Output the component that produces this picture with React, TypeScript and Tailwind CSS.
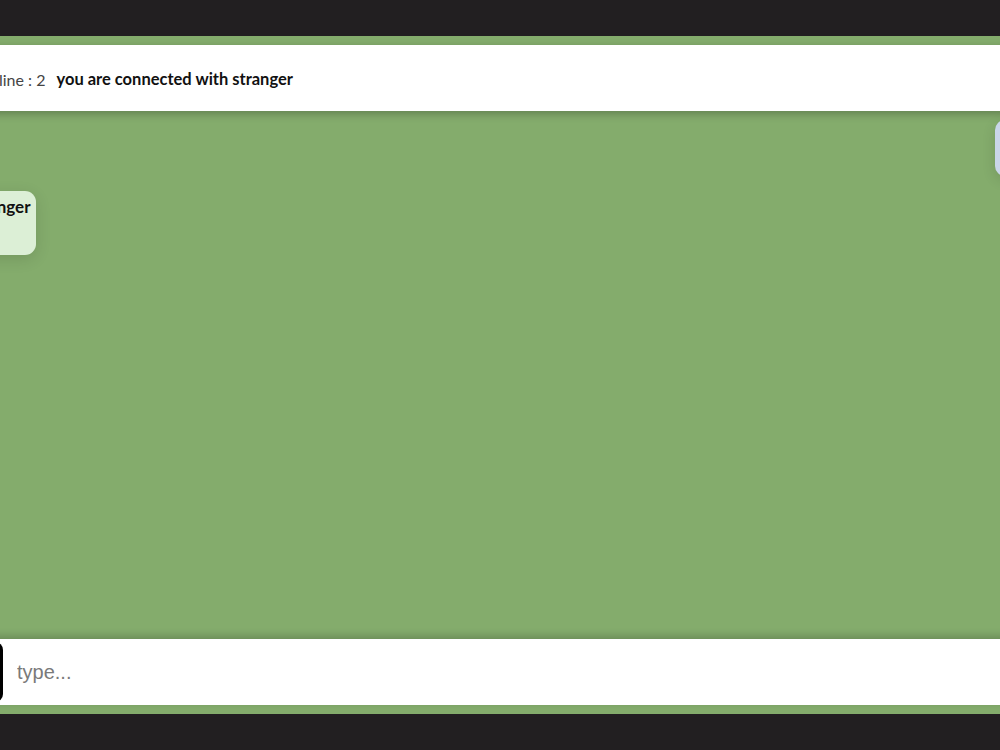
import React from "react";

export default function App() {
  return (
    <div className="h-[750px] w-[1000px] overflow-hidden bg-[#221f21] pt-[36px] pb-[36px] font-['Lato',sans-serif]">
      {/* chat window, wider than the viewport */}
      <div className="ml-[-120px] flex h-full w-[1300px] flex-col bg-[#84ac6c] py-[9px]">
        {/* header */}
        <div className="relative z-10 flex h-[66px] shrink-0 items-center gap-[11px] bg-white pl-[101px] pt-[3px] shadow-[0_3px_8px_rgba(0,0,0,0.25)]">
          <span className="text-[16px] text-[#444]">online : 2</span>
          <span className="text-[16.5px] font-bold text-[#111]">you are connected with stranger</span>
        </div>

        {/* messages */}
        <div className="flex flex-1 flex-col gap-[15px] overflow-hidden pt-[9px]">
          <div className="flex justify-end pr-[35px]">
            <div className="h-[56px] w-[150px] rounded-[10px] bg-[#c9d6e9] shadow-[0_4px_14px_rgba(0,0,0,0.12)]" />
          </div>
          <div className="flex">
            <div className="ml-[82px] flex h-[64px] flex-col rounded-[11px] bg-[#dcefd6] px-[6px] pt-[3px] shadow-[0_4px_16px_rgba(0,0,0,0.12)]">
              <span className="text-[17px] font-bold text-[#111]">stranger</span>
            </div>
          </div>
        </div>

        {/* input bar */}
        <div className="relative z-10 flex h-[66px] shrink-0 items-center gap-[14px] bg-white pl-[63px] shadow-[0_-3px_8px_rgba(0,0,0,0.2)]">
          <button className="h-[60px] w-[60px] shrink-0 rounded-[8px] bg-black" />
          <input
            placeholder="type..."
            className="h-full flex-1 bg-transparent font-['Liberation_Sans',Arial,sans-serif] text-[20px] text-[#222] outline-none placeholder:text-[#7a7a7a]"
          />
        </div>
      </div>
    </div>
  );
}
